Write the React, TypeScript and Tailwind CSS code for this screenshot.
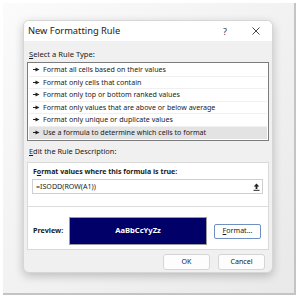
import React from "react";

const font = { fontFamily: '"Noto Sans", "Open Sans", "Liberation Sans", sans-serif' };

function Arrow() {
  return (
    <svg width="7" height="5" viewBox="0 0 7 5" className="shrink-0">
      <path d="M0 2.5 H3" stroke="#222" strokeWidth="1" />
      <path d="M2.5 0.5 L6.5 2.5 L2.5 4.5 Z" fill="#222" />
    </svg>
  );
}

const items = [
  "Format all cells based on their values",
  "Format only cells that contain",
  "Format only top or bottom ranked values",
  "Format only values that are above or below average",
  "Format only unique or duplicate values",
  "Use a formula to determine which cells to format",
];

export default function App() {
  return (
    <div className="w-[300px] h-[300px] bg-white pt-[3px] pl-[3px]" style={font}>
      <div className="w-[293px] h-[292px] bg-gradient-to-br from-[#fbfbfb] to-[#e9e9e9] border-r-2 border-b-2 border-[#c4c4c4] pt-[17px] pl-[20px]">
        <div className="w-[250px] h-[253px] rounded-[6px] bg-[#f0f0f0] border border-[#d6d6d6] overflow-hidden shadow-[0_3px_10px_rgba(0,0,0,0.22)] flex flex-col">
          {/* title bar */}
          <div className="h-[20px] bg-white flex items-center pl-[4px] pr-[12px] shrink-0">
            <span className="text-[9.3px] text-[#1a1a1a] leading-none">New Formatting Rule</span>
            <span className="ml-auto text-[9px] text-[#333] leading-none mr-[25px]">?</span>
            <svg width="8" height="8" viewBox="0 0 8 8">
              <path d="M0.5 0.5 L7.5 7.5 M7.5 0.5 L0.5 7.5" stroke="#333" strokeWidth="0.9" />
            </svg>
          </div>
          {/* body */}
          <div className="px-[3px] flex flex-col">
            <div className="text-[7.6px] leading-[11px] text-[#1a1a1a] mt-[8px] ml-[2px]">
              <span className="underline">S</span>elect a Rule Type:
            </div>
            <div className="mt-[2px] h-[79px] bg-white border border-[#7c7c7c] p-[1px] flex flex-col">
              {items.map((t, i) => (
                <div
                  key={t}
                  className={
                    "h-[12.5px] flex items-center gap-[3px] pl-[4px] text-[7.1px] text-[#1a1a1a] leading-none " +
                    (i === items.length - 1 ? "bg-[#e3e3e3]" : "border-b border-[#f0f0f0]")
                  }
                >
                  <Arrow />
                  <span>{t}</span>
                </div>
              ))}
            </div>
            <div className="text-[7.4px] leading-[11px] text-[#1a1a1a] mt-[5px] ml-[2px]">
              <span className="underline">E</span>dit the Rule Description:
            </div>
            <div className="mt-[5px] h-[88px] bg-white border border-[#d9d9d9] flex flex-col">
              <div className="text-[7px] font-bold leading-[11px] text-[#1a1a1a] mt-[3px] ml-[5px]">
                F<span className="underline">o</span>rmat values where this formula is true:
              </div>
              <div className="mt-[2px] ml-[4px] w-[231px] h-[15px] border border-[#cfcfcf] flex items-center pl-[3px] pr-[2px]">
                <span className="text-[7.1px] text-[#1a1a1a] leading-none">=ISODD(ROW(A1))</span>
                <svg className="ml-auto" width="7" height="8" viewBox="0 0 7 8">
                  <path d="M3.5 0.5 L6.3 3.6 H4.4 V6 H2.6 V3.6 H0.7 Z" fill="#222" />
                  <path d="M0.5 7.3 H6.5" stroke="#222" strokeWidth="1" />
                </svg>
              </div>
              <div className="mt-[12px] border-t border-[#dcdcdc]" />
              <div className="flex items-center mt-[10px]">
                <span className="text-[7.2px] font-bold text-[#1a1a1a] ml-[5px] w-[36px] leading-none">Preview:</span>
                <div className="w-[138px] h-[28px] bg-[#000068] border border-[#9a9a9a] flex items-center justify-center">
                  <span className="text-white font-bold text-[7.6px] leading-none">AaBbCcYyZz</span>
                </div>
                <div className="ml-[7px] w-[47px] h-[15px] bg-white border border-[#6e8fbf] rounded-[2px] flex items-center justify-center text-[7.1px] text-[#1a1a1a] leading-none">
                  <span><span className="underline">F</span>ormat...</span>
                </div>
              </div>
            </div>
            <div className="flex justify-end gap-[8px] mt-[4px] pr-[4px]">
              <div className="w-[47px] h-[16px] bg-[#fdfdfd] border border-[#d5d5d5] rounded-[3px] flex items-center justify-center text-[7.1px] text-[#1a1a1a] leading-none">OK</div>
              <div className="w-[47px] h-[16px] bg-[#fdfdfd] border border-[#d5d5d5] rounded-[3px] flex items-center justify-center text-[7.1px] text-[#1a1a1a] leading-none">Cancel</div>
            </div>
          </div>
        </div>
      </div>
    </div>
  );
}
